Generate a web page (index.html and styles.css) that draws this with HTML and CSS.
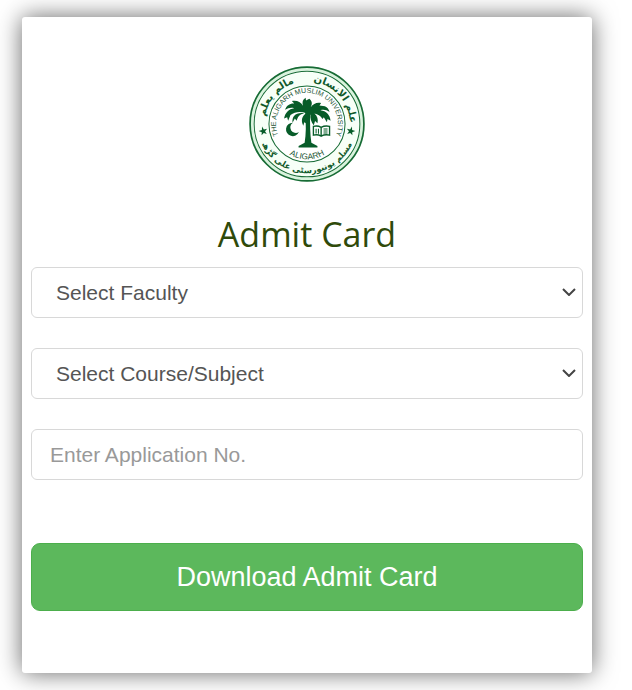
FILE: index.html
```html
<!DOCTYPE html>
<html lang="en">
<head>
<meta charset="utf-8">
<meta name="viewport" content="width=device-width, initial-scale=1">
<title>Admit Card</title>
<link rel="stylesheet" href="styles.css">
</head>
<body>
<main class="card">
  <svg class="crest" viewBox="0 0 392 392" role="img" aria-label="Aligarh Muslim University">
    <defs>
      <path id="arc-name" d="M121 249A92 92 0 1 1 271 249"/>
      <path id="arc-place" d="M91 196A105 105 0 0 0 301 196"/>
      <path id="arc-top-left" d="M69 196A127 127 0 0 1 196 69"/>
      <path id="arc-top-right" d="M196 69A127 127 0 0 1 323 196"/>
      <path id="arc-bottom" d="M50 196A146 146 0 0 0 342 196"/>
      <path id="star" d="M0-14L3-4L13-4L5 2L8 11L0 6L-8 11L-5 2L-13-4L-3-4Z"/>
    </defs>
    <circle class="ring-tint" cx="196" cy="196" r="165"/>
    <circle class="ring-outer" cx="196" cy="196" r="169"/>
    <circle class="ring-thin" cx="196" cy="196" r="157"/>
    <circle class="ring-inner" cx="196" cy="196" r="113"/>
    <text class="latin"><textPath href="#arc-name" startOffset="50%">THE ALIGARH MUSLIM UNIVERSITY</textPath></text>
    <text class="latin place"><textPath href="#arc-place" startOffset="50%">ALIGARH</textPath></text>
    <text class="script"><textPath href="#arc-top-left" startOffset="46%">مالم يعلم</textPath></text>
    <text class="script"><textPath href="#arc-top-right" startOffset="54%">علم الانسان</textPath></text>
    <text class="script script-low"><textPath href="#arc-bottom" startOffset="50%">مسلم یونیورسٹی علی گڑھ</textPath></text>
    <use class="ink" href="#star" transform="translate(66 217) rotate(-15)"/>
    <use class="ink" href="#star" transform="translate(326 217) rotate(15)"/>
    <path class="ink" d="M154 192A20 20 0 1 0 172 220A16 16 0 1 1 154 192Z"/>
    <g class="ink" transform="translate(0 6)">
      <path d="M190 158c4 32 3 63-1 88l-18 9v5h56v-5l-18-9c-4-25-4-56-4-88z"/>
      <path d="M194 158c-16-6-34-5-47 5l-7 17-3-10-9 4c3-18 14-29 30-31-9-3-18-1-27 5 3-13 15-20 27-19l-7-7c14-3 26 2 33 14-3-11-1-19 8-24l1 8 10-5c9 7 9 16 4 25 8-10 18-15 31-12l-5 7 16 2c8 4 12 9 14 17-9-6-18-8-27-5 17 2 28 13 30 31l-9-5-2 10-9-15-4 5c-6-9-14-14-24-16 9 8 12 17 9 29l-7-7-4 13c-8-10-11-21-10-32-7 9-10 17-9 28l-9-5-3 10c-8-15-4-29 9-37-16 0-24 7-29 22l-5-6-7 12c-2-19 9-31 34-28z"/>
    </g>
    <path class="book" d="M215 203q13-3 23 3q11-6 25-3v26q-14-3-25 3q-10-6-23-3zM238 206v26"/>
    <path class="book-lines" d="M223 210v14M230 210v15M245 211h12M245 217h12M245 223h12"/>
  </svg>
  <h1 class="title">Admit Card</h1>
  <form class="form">
    <div class="field">
      <select class="control select" aria-label="Select Faculty"><option>Select Faculty</option></select>
      <svg class="chevron" viewBox="0 0 14 8" aria-hidden="true"><path d="M1 1l6 6 6-6"/></svg>
    </div>
    <div class="field">
      <select class="control select" aria-label="Select Course/Subject"><option>Select Course/Subject</option></select>
      <svg class="chevron" viewBox="0 0 14 8" aria-hidden="true"><path d="M1 1l6 6 6-6"/></svg>
    </div>
    <div class="field">
      <input class="control" type="text" aria-label="Enter Application No." placeholder="Enter Application No.">
    </div>
    <button class="submit" type="button">Download Admit Card</button>
  </form>
</main>
</body>
</html>
```
FILE: styles.css
```css
* {
  box-sizing: border-box;
}

body {
  margin: 0;
  padding: 17px 40px 17px 22px;
  background: #fff;
  font-family: "Liberation Sans", Arial, sans-serif;
}

.card {
  padding: 41px 9px 62px;
  border-radius: 3px;
  background: #fff;
  box-shadow: 0 0 24px rgba(0, 0, 0, 0.6);
}

.crest {
  display: block;
  width: 132px;
  height: 132px;
  margin: 0 auto;
}

.ring-tint {
  fill: #f7fff7;
  stroke: #d9f3dd;
  stroke-width: 12;
}

.ring-outer,
.ring-thin,
.ring-inner {
  fill: none;
  stroke: #176b35;
  stroke-width: 5;
}

.ring-thin {
  stroke-width: 3;
}

.ring-inner {
  fill: #fff;
  stroke-width: 3;
}

.latin {
  fill: #1d5535;
  font-size: 21px;
  text-anchor: middle;
}

.place {
  font-size: 25px;
}

.script {
  fill: #105a2b;
  font-family: "DejaVu Sans", sans-serif;
  font-size: 30px;
  font-weight: bold;
  text-anchor: middle;
}

.script-low {
  font-size: 25px;
}

.ink {
  fill: #075c29;
}

.book,
.book-lines {
  fill: none;
  stroke: #075c29;
  stroke-width: 4;
}

.book-lines {
  stroke-width: 3;
}

.title {
  margin: 19px 0 8px;
  color: #2f4a0a;
  font-family: "Open Sans", "Noto Sans", sans-serif;
  font-size: 34px;
  font-weight: 400;
  line-height: 50px;
  text-align: center;
}

.form {
  display: flex;
  flex-direction: column;
  gap: 30px;
}

.field {
  position: relative;
}

.control {
  display: block;
  width: 100%;
  height: 51px;
  padding: 0 18px;
  border: 1px solid #d8d8d8;
  border-radius: 6px;
  background: #fff;
  color: #555;
  font-family: inherit;
  font-size: 21px;
}

.control::placeholder {
  color: #999;
  opacity: 1;
}

.select {
  padding: 0 24px;
  appearance: none;
}

.chevron {
  position: absolute;
  top: 21px;
  right: 7px;
  width: 14px;
  height: 8px;
  fill: none;
  stroke: #444;
  stroke-width: 2;
  pointer-events: none;
}

.submit {
  height: 68px;
  margin-top: 33px;
  border: 1px solid #4cae4c;
  border-radius: 9px;
  background: #5cb85c;
  color: #fff;
  font-family: inherit;
  font-size: 27px;
}
```
